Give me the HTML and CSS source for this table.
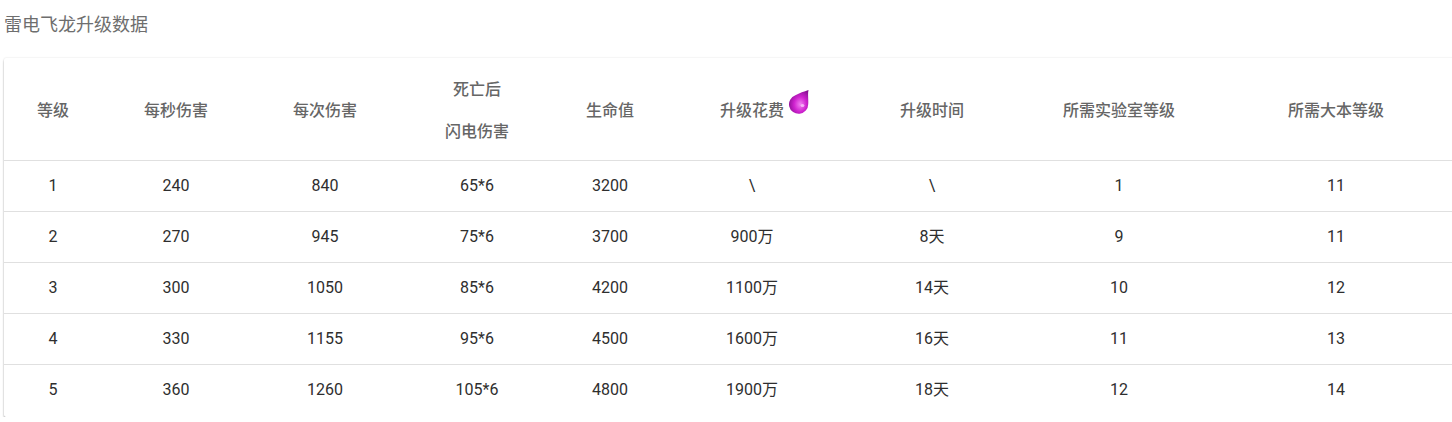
FILE: index.html
```html
<!DOCTYPE html>
<html lang="zh">
<head>
<meta charset="utf-8">
<title>雷电飞龙升级数据</title>
<link rel="stylesheet" href="styles.css">
</head>
<body>
<div class="page">
  <h2 class="title">雷电飞龙升级数据</h2>
  <div class="card">
    <table class="data">
      <colgroup>
        <col class="c1"><col class="c2"><col class="c3"><col class="c4"><col class="c5"><col class="c6"><col class="c7"><col class="c8"><col class="c9">
      </colgroup>
      <thead>
        <tr>
          <th>等级</th>
          <th>每秒伤害</th>
          <th>每次伤害</th>
          <th>死亡后<br>闪电伤害</th>
          <th>生命值</th>
          <th><span class="cost">升级花费<svg class="elixir" width="22" height="25" viewBox="0 0 22 25"><defs><radialGradient id="eg" cx="0.58" cy="0.6" r="0.7"><stop offset="0" stop-color="#f27ef1"/><stop offset="0.45" stop-color="#d023d0"/><stop offset="1" stop-color="#7a0a86"/></radialGradient></defs><path d="M20.5 1 C19.5 5.5 20.6 10.5 20.2 15.2 A9.6 9.6 0 1 1 7.4 6.2 C11.5 3.8 16 2.8 20.5 1 Z" fill="url(#eg)"/><ellipse cx="14.5" cy="16.5" rx="1.9" ry="1.5" fill="#fcd6fb" opacity="0.7"/></svg></span></th>
          <th>升级时间</th>
          <th>所需实验室等级</th>
          <th>所需大本等级</th>
        </tr>
      </thead>
      <tbody>
        <tr><td>1</td><td>240</td><td>840</td><td>65*6</td><td>3200</td><td>\</td><td>\</td><td>1</td><td>11</td></tr>
        <tr><td>2</td><td>270</td><td>945</td><td>75*6</td><td>3700</td><td>900万</td><td>8天</td><td>9</td><td>11</td></tr>
        <tr><td>3</td><td>300</td><td>1050</td><td>85*6</td><td>4200</td><td>1100万</td><td>14天</td><td>10</td><td>12</td></tr>
        <tr><td>4</td><td>330</td><td>1155</td><td>95*6</td><td>4500</td><td>1600万</td><td>16天</td><td>11</td><td>13</td></tr>
        <tr><td>5</td><td>360</td><td>1260</td><td>105*6</td><td>4800</td><td>1900万</td><td>18天</td><td>12</td><td>14</td></tr>
      </tbody>
    </table>
  </div>
</div>
</body>
</html>
```

FILE: styles.css
```css
html, body {
  margin: 0;
  padding: 0;
  background: #ffffff;
  overflow: hidden;
}

.page {
  padding: 11px 0 0 4px;
  width: 1460px;
}

.title {
  margin: 0 0 23px 0;
  font-family: "Noto Sans CJK SC", "Noto Sans", sans-serif;
  font-size: 18px;
  font-weight: 400;
  line-height: 24px;
  color: #6e6e6e;
}

.card {
  background: #ffffff;
  border-radius: 2px;
  box-shadow: 0 2px 2px rgba(0, 0, 0, 0.3), 0 0 2px rgba(0, 0, 0, 0.14);
  width: 1456px;
}

.data {
  border-collapse: collapse;
  table-layout: fixed;
  width: 1456px;
}

.c1 { width: 98px; }
.c2 { width: 148px; }
.c3 { width: 150px; }
.c4 { width: 154px; }
.c5 { width: 112px; }
.c6 { width: 172px; }
.c7 { width: 188px; }
.c8 { width: 186px; }
.c9 { width: 248px; }

.data th {
  font-family: "Noto Sans CJK SC", "Noto Sans", sans-serif;
  font-size: 16px;
  font-weight: 500;
  color: #666666;
  line-height: 42px;
  padding: 9px 0 9px 0;
  text-align: center;
  border-bottom: 1px solid #e0e0e0;
  vertical-align: middle;
}

.data td {
  font-family: Roboto, "Noto Sans CJK SC", sans-serif;
  font-size: 16px;
  color: #2e2e2e;
  line-height: 24px;
  padding: 13px 0;
  text-align: center;
  border-bottom: 1px solid #e0e0e0;
}

.data tbody tr:last-child td {
  border-bottom: none;
  padding-bottom: 15px;
}

.cost {
  position: relative;
}

.elixir {
  position: absolute;
  left: 100%;
  top: -8px;
  margin-left: 4px;
}
```
